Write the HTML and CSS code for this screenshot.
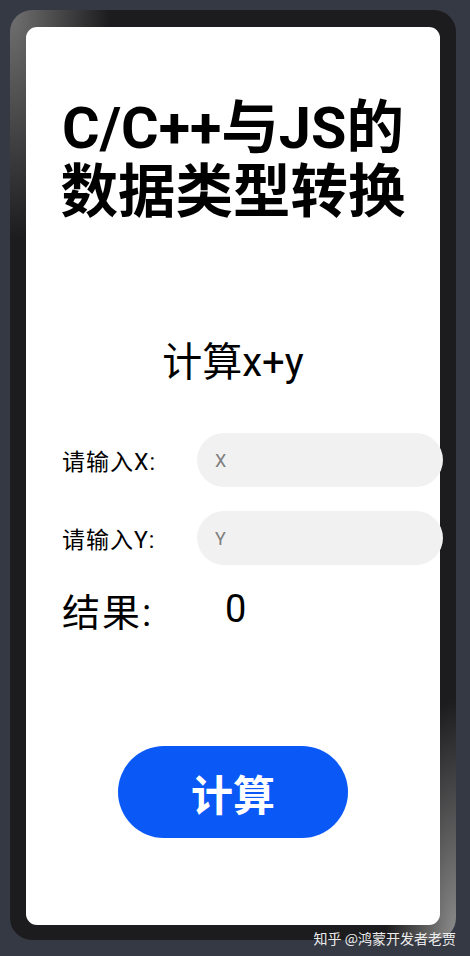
FILE: index.html
```html
<!DOCTYPE html>
<html lang="zh">
<head>
<meta charset="utf-8">
<link rel="stylesheet" href="styles.css">
</head>
<body>
<div class="frame">
  <div class="screen">
    <h1 class="title">C/C++与JS的<br>数据类型转换</h1>
    <div class="subtitle">计算x+y</div>
    <div class="row">
      <span class="label">请输入X:</span>
      <input class="field" type="text" placeholder="X">
    </div>
    <div class="row">
      <span class="label">请输入Y:</span>
      <input class="field" type="text" placeholder="Y">
    </div>
    <div class="result">
      <span class="result-label">结果:</span>
      <span class="result-value">0</span>
    </div>
    <button class="calc" type="button">计算</button>
  </div>
  <div class="watermark">知乎 @鸿蒙开发者老贾</div>
</div>
</body>
</html>
```
FILE: styles.css
```css
html, body {
  margin: 0;
  padding: 0;
}
body {
  width: 470px;
  height: 956px;
  background: #353944;
  font-family: Roboto, "Noto Sans CJK SC", sans-serif;
  overflow: hidden;
}
.frame {
  position: relative;
  box-sizing: border-box;
  margin: 10px 0 0 10px;
  width: 446px;
  height: 930px;
  padding: 17px 16px 15px 16px;
  border-radius: 22px;
  background:
    radial-gradient(ellipse 100px 230px at 0 0, rgba(150,150,150,0.7), rgba(150,150,150,0) 100%),
    radial-gradient(ellipse 70px 240px at 100% 100%, rgba(170,170,170,0.8), rgba(170,170,170,0) 100%),
    #1c1c1e;
}
.screen {
  box-sizing: border-box;
  width: 414px;
  height: 898px;
  background: #ffffff;
  border-radius: 11px;
  display: flex;
  flex-direction: column;
  align-items: center;
  padding-top: 70px;
  color: #000;
}
.title {
  margin: 0;
  font-size: 57.5px;
  line-height: 64px;
  font-weight: 700;
  text-align: center;
}
.subtitle {
  margin-top: 113px;
  font-size: 40px;
  line-height: 50px;
  font-weight: 400;
}
.row {
  align-self: stretch;
  display: flex;
  align-items: center;
  padding-left: 36px;
  margin-top: 45px;
}
.row + .row {
  margin-top: 24px;
}
.label {
  flex: 0 0 135px;
  font-size: 23px;
  letter-spacing: 1px;
  font-family: Roboto, "Noto Sans CJK SC", sans-serif;
}
.field {
  flex: 0 0 246px;
  box-sizing: border-box;
  width: 246px;
  height: 54px;
  border: none;
  outline: none;
  border-radius: 27px;
  background: #f1f1f1;
  padding: 0 18px;
  font-size: 18px;
  font-family: Roboto, "Noto Sans CJK SC", sans-serif;
  color: #333;
}
.field::placeholder {
  color: #7e7e7e;
}
.result {
  align-self: stretch;
  display: flex;
  align-items: center;
  padding-left: 36px;
  margin-top: 19px;
  height: 50px;
  font-size: 38px;
}
.result-label {
  flex: 0 0 163px;
  letter-spacing: 2px;
}
.calc {
  margin-top: 112px;
  width: 230px;
  height: 92px;
  border: none;
  border-radius: 46px;
  background: #0a59f7;
  color: #ffffff;
  font-size: 42px;
  font-weight: 700;
  font-family: "Noto Sans CJK SC", sans-serif;
  padding: 0;
}
.watermark {
  position: absolute;
  right: 0;
  bottom: -7px;
  font-size: 14px;
  line-height: 18px;
  color: #ececec;
  font-family: "Noto Sans CJK SC", sans-serif;
  white-space: nowrap;
}
```
